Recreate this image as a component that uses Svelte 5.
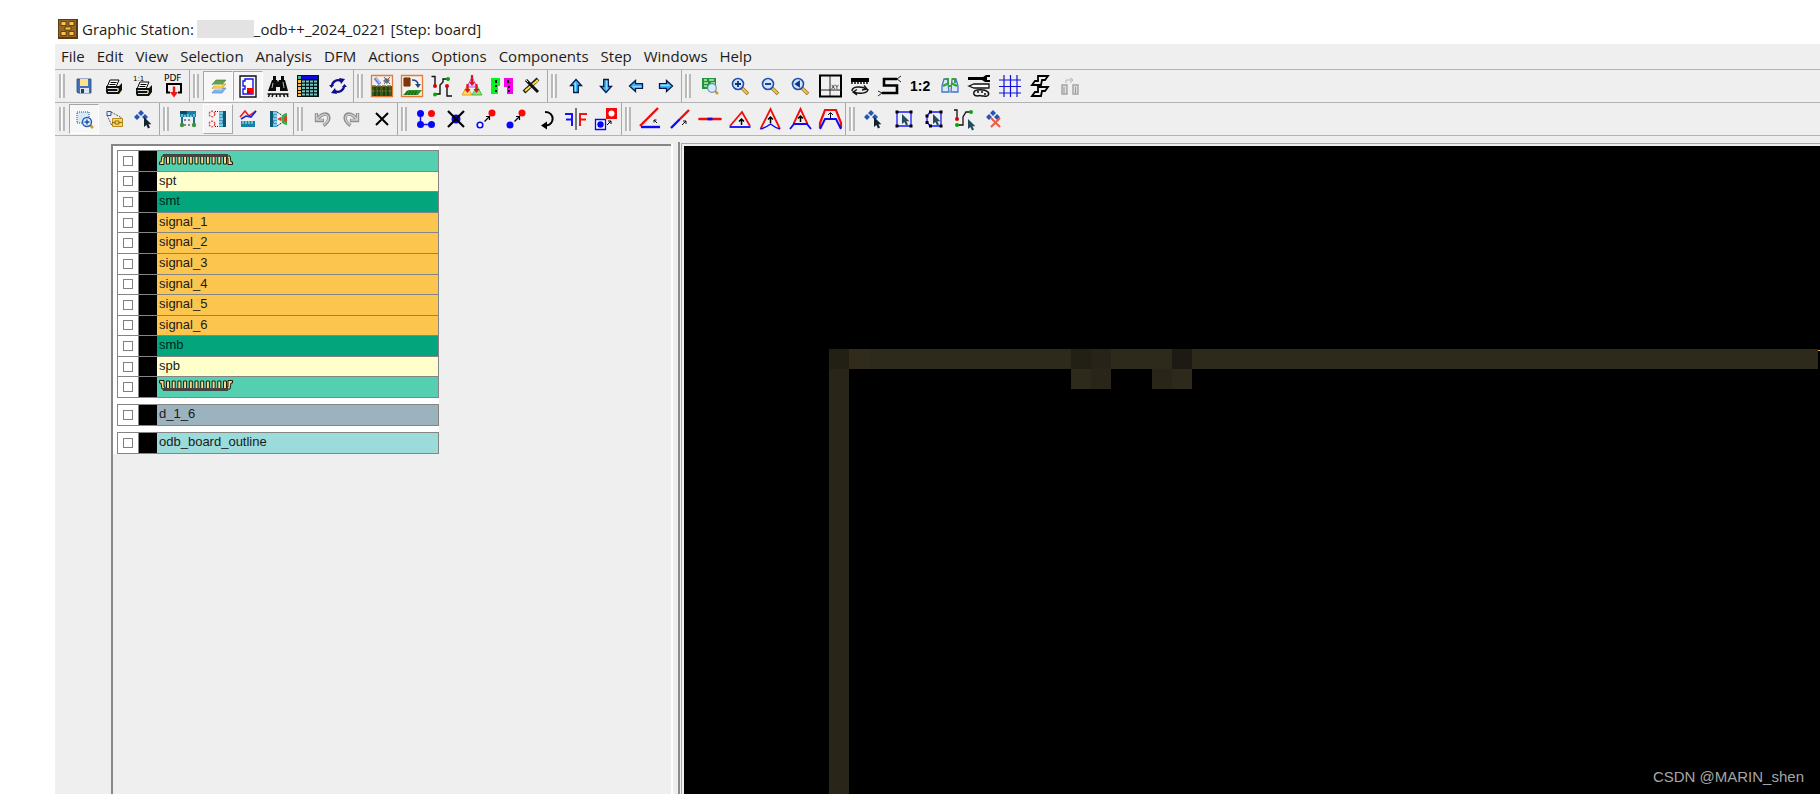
<script>
  const cursor = (x, y, fill = '#123') =>
    `<path transform="translate(${x} ${y})" d="M0 0V10L2.4 8L4 11.5L6 10.5L4.4 7.2H7.4Z" fill="${fill}"/>`;

  const diamonds = '<path d="M11 5l3 3-3 3-3-3zM7 9l3 3-3 3-3-3zM15 9l3 3-3 3-3-3z" fill="#2456b8"/>';

  const lens = (sign) => `
    <path d="M16 16l6 6" stroke="#9a7426" stroke-width="3.6"/>
    <path d="M16 16l5.5 5.5" stroke="#f0c45c" stroke-width="2"/>
    <circle cx="12" cy="12" r="5.5" fill="#cfe6fb" stroke="#1f4fa8" stroke-width="1.6"/>
    <path d="${sign}" stroke="#0b2f88" stroke-width="1.8" fill="#0b2f88"/>`;

  const printer = `
    <path d="M10 8h9l-3 7H7z" fill="#fff" stroke="#000"/>
    <path d="M10.5 10.5h6M9.5 12.5h6" stroke="#000"/>
    <path d="M6 14h13l3-3v7l-3 4H7l-1-2z" fill="#111"/>
    <path d="M7.5 16.5h11M8 19.5h10" stroke="#ddd"/>
    <circle cx="18" cy="18" r="1" fill="#dd3"/>`;

  const smallArrow = '<path d="M12.5 16.5l5-5m-3.5 0h3.5v3.5" stroke="#000" stroke-width="1.2" fill="none"/>';
  const upArrow = '<path d="M14.5 20v-5m-2.5 1.5l2.5-2.5l2.5 2.5" stroke="#000" stroke-width="1.5" fill="none"/>';

  const blockArrow = (angle) => `
    <path transform="rotate(${angle} 14 14)" d="M14 7.500l5.5 6h-3.2v7h-4.6v-7H8.500z" fill="#36b5fa" stroke="#06194c" stroke-width="1.3"/>
    <path transform="rotate(${angle} 14 14)" d="M13.2 10.5v9" stroke="#a5e8ff" stroke-width="1.2"/>`;

  const curl = `
    <path d="M8.5 8v7.5H16M9 15C12 9.5 18.500 7 20.5 11C22 14.5 19 18 15.5 20.5" fill="none" stroke="#8e8e8e" stroke-width="3.4"/>
    <path d="M8.5 8.5v6.5H15M9 14.5C12 9.5 18.5 7.5 20.3 11.5C21.5 14.5 19 17.5 15.8 20" fill="none" stroke="#cfcfcf" stroke-width="1.3"/>`;

  const icons = {
    save: `<path d="M7 7h14v14H8l-1-1z" fill="#4571b8" stroke="#244a86" stroke-width=".8"/><path d="M10 7h8v7h-8z" fill="#ffe18a"/><path d="M10 16h9v5h-9z" fill="#dbe5f0"/><path d="M11 17h3v4h-3z" fill="#253c66"/>`,
    print: printer,
    print11: `<g transform="translate(0 2)">${printer}</g><text x="3" y="9" font-family="DejaVu Sans" font-size="7">1:1</text>`,
    pdf: `<text x="4" y="9" font-family="DejaVu Sans" font-size="9">PDF</text><path d="M10 20.5H7V12h14v8.5h-3" fill="none" stroke="#000" stroke-width="2"/><path d="M14 14.5v8" stroke="#f21313" stroke-width="2.4"/><path d="M10 20h8l-4 5.5z" fill="#f21313"/>`,
    layers: `<path d="M12 16h10l-4 5H8z" fill="#82b4ee" stroke="#4a7fc4" stroke-width=".6"/><path d="M12 12h10l-4 4.500H8z" fill="#ffc83a" stroke="#bd8e1c" stroke-width=".6"/><path d="M12 8h10l-4 4.500H8z" fill="#63a054" stroke="#3e7a34" stroke-width=".6"/><path d="M9 13h9M9 17h9" stroke="#f6f6f6"/>`,
    page: `<path d="M6 4h16v21H6z" fill="#f8f8f8" stroke="#111" stroke-width="1.4"/><path d="M11 7h8v15H9v-5h2v-3H9V9h2z" fill="#fff" stroke="#1616ef" stroke-width="1.4"/><path d="M13 16h6v6h-6z" fill="#f00"/><path d="M13 19h3v3h-3z" fill="#b00030"/>`,
    find: `<path d="M9 4h3v4h-3zM17 4h3v4h-3zM8 8h5l1 2l1-2h6l3 11h-8v-4h-4v4H4z" fill="#0a0a0a"/><path d="M9 11l-1 5M19 10l1 6" stroke="#bbb"/><path d="M3.5 22h21M5.5 22l-1 3M9 22l-1 3M12.5 22v3M16 22v3M19.5 22l1 3M23 22l1 3" stroke="#111" stroke-width="1.5"/>`,
    table: `<path d="M3 3h22v22H3z" fill="#071414"/><path d="M8 4h16v3H8z" fill="#0a0ae0"/><path d="M4 4h3v3H4z" fill="#4ab597"/><path d="M4 8h3v3H4zM4 12h3v2H4zM4 15h3v3H4zM4 19h3v2H4zM4 22h3v2H4z" fill="#ffbd4f"/><path d="M8 9.5h16M8 12.7h16M8 16h16M8 19.2h16M8 22.5h16" stroke="#73c3c3" stroke-width="2" stroke-dasharray="3 1"/>`,
    refresh: `<path d="M8 14a6 6 0 0 1 9-5M20 14a6 6 0 0 1-9 5" fill="none" stroke="#0c0c8c" stroke-width="2.2"/><path d="M15 6l6 1l-4 5zM13 22l-6-1l4-5z" fill="#0c0c8c"/><path d="M5 13h5l-2.5 3zM18 15h5l-2.5-3z" fill="#0c0c8c"/>`,
    scene: `<path d="M3.5 3.5h21v21h-21z" fill="#f3f1e9" stroke="#e87a38" stroke-width="1.3"/><path d="M4 14h20v10H4z" fill="#315e1c"/><path d="M4 14h20M4 19h20" stroke="#9a6a2a" stroke-width="1.4" stroke-dasharray="4 1"/><path d="M7 15v9M11 15v9M16 15v9M20 15v9" stroke="#0f2408"/><path d="M7 6l5 6" stroke="#6b85e8" stroke-width="3.5"/><path d="M8 6l4 5" stroke="#dbe4ff"/><path d="M15 9l3-3l4 2l-3 4z" fill="#678"/><path d="M16 12l6-7M16 5l6 7" stroke="#567"/>`,
    chip: `<path d="M3.5 3.5h21v21h-21z" fill="#f6f2ec" stroke="#e87a38" stroke-width="1.3"/><path d="M6 6h6v8H6z" fill="#b44d11" stroke="#502000"/><path d="M7 8h4M7 10h4M7 12h4" stroke="#501c00"/><path d="M14 8q6 0 6 5" fill="none" stroke="#274689" stroke-width="1.5"/><path d="M17 12h6l-3 4z" fill="#274689"/><path d="M10 18h14l-4 5H5z" fill="#2e962c"/><path d="M8 20h12M7 22h12" stroke="#10480d" stroke-dasharray="2 1"/>`,
    route: `<path d="M3.5 4.5h3.5v9M7 22h5v-9l3-3v-3h5M19 14v10h5" fill="none" stroke="#111" stroke-width="1.4"/><circle cx="7" cy="14" r="2" fill="#d00"/><circle cx="19" cy="14" r="2" fill="#d00"/><circle cx="7" cy="22.5" r="2" fill="#0a0"/><circle cx="20" cy="7" r="2" fill="#0a0"/>`,
    prisms: `<path d="M14 5l5 10H9z" fill="#e5caff" stroke="#a55be0"/><path d="M9 14l5 9H4z" fill="#ffd76b" stroke="#f09a20"/><path d="M19 14l5 9H14z" fill="#8fe070" stroke="#40c040"/><path d="M14 3v7M9.5 12v6M18.5 12v6" stroke="#e01020" stroke-width="2.2"/><path d="M11 10h6l-3 4zM6.5 17h6l-3 4zM15.5 17h6l-3 4z" fill="#e01020"/>`,
    flip: `<path d="M3 6h9v8h-2v8H3z" fill="#00f51a"/><path d="M16 6h9v16h-6v-7h-3z" fill="#fb00ee"/><path d="M7 8h2v3H7zM7 13h2v2H7zM7 18h2v2H7zM19 8h2v3h-2zM20 14h2v2h-2zM20 18h2v2h-2z" fill="#111"/>`,
    tools: `<path d="M6 20L20 7" stroke="#1a1a1a" stroke-width="4"/><path d="M7 19L20 8" stroke="#ffe43c" stroke-width="2"/><path d="M8 8l12 12" stroke="#111" stroke-width="3"/><path d="M7 7l3 3" stroke="#ddd"/>`,
    up: blockArrow(0),
    down: blockArrow(180),
    left: blockArrow(270),
    right: blockArrow(90),
    zoomBoard: `<path d="M6 6h14v11H6z" fill="#23923a"/><path d="M8 8h3M13 8h5M8 11h4M15 11h4M8 14h3" stroke="#b8f0b8" stroke-width="1.3"/><path d="M18 18l4 4" stroke="#d39a32" stroke-width="2.5"/><circle cx="16" cy="16" r="4.3" fill="#d6ecfc" stroke="#6d92bd" stroke-width="1.2"/>`,
    zoomIn: lens('M9 12h6M12 9v6'),
    zoomOut: lens('M9 12h6'),
    zoomPrev: lens('M10 12l3-2v4z'),
    xy: `<path d="M4 3.5h21v21H4z" fill="#f1f1f1" stroke="#000" stroke-width="2"/><path d="M14 4v20M4 18h21" stroke="#222"/><text x="15" y="17" font-family="DejaVu Sans" font-size="6">XY</text>`,
    measure: `<path d="M5 6h18v4H5z"/><path d="M6 12v-2M9 12v-2M12 12v-2M15 12v-2M18 12v-2M21 12v-2" stroke="#000" stroke-width="1.4"/><path d="M6 19c0-5 10-5 14-2M22 17c0 5-10 5-14 3M18 13.5l3 3.5l-5 1M11 17.5L7 20l4 3" fill="none" stroke="#111" stroke-width="1.4"/>`,
    net: `<path d="M21 7H8v6.5h13V21H6" fill="none" stroke="#000" stroke-width="2.6"/><path d="M21 7l4-3M21 7l4 3M6 21l-4-2M6 21l-4 3" stroke="#222"/>`,
    half: `<text x="4" y="19" font-family="Liberation Sans" font-weight="700" font-size="14">1:2</text>`,
    search: `<path d="M8 7h4v4l1 9H6v-6zM16 7h4l2 7v6h-7z" fill="#d8e8fa" stroke="#4674bf" stroke-width="1.3"/><path d="M9 7h3v4M16 7h3v4M12 14h4M7 14l6-3M15 11l6 3" stroke="#33a33a" stroke-width="2" fill="none"/>`,
    config: `<path d="M2 5h15l3-2h4v2h-3v3h3v2h-5l-3-2H2z" fill="#000"/><path d="M3 14l5-2h15v4H8z" fill="#fff" stroke="#111" stroke-width="1.3"/><path d="M8 20c1-3 11-3 14 0c2 3-1 5-4 4c-4 0-5-1-6 0c-3 0-5-1-4-4z" fill="#eee" stroke="#111" stroke-width="1.5"/><path d="M11 20h2M15 20h2M18 22h2" stroke="#111" stroke-width="1.5"/>`,
    grid: `<path d="M8 3v22M14.5 3v22M21 3v22M3 8h22M3 14.5h22M3 21h22" stroke="#1010dd" stroke-width="1.2"/>`,
    shapes: `<path d="M12 4h10l-3 4h-3l-1 5H6l3-4h3zM12 15h10l-3 4h-3l-1 5H6l3-4h3z" fill="none" stroke="#000" stroke-width="1.8"/>`,
    compare: `<path d="M6 13h5v9H6zM17 13h5v9h-5z" fill="#ddd" stroke="#a4a4a4" stroke-width="1.4"/><path d="M10 11V8h6M14 6l3 2l-3 3" fill="none" stroke="#b5b5b5"/><path d="M8 15v6M19.5 15v6" stroke="#999"/>`,

    selectZoom: `<path d="M7 7h12v11H7z" fill="#d6e9fb" stroke="#254f91" stroke-dasharray="1 1"/><path d="M19 19l4 4" stroke="#d39a32" stroke-width="2.5"/><circle cx="17" cy="17" r="4.5" fill="#e0effc" stroke="#2a5cad" stroke-width="1.4"/><path d="M14.5 17h5M17 14.5v5" stroke="#1d4da3" stroke-width="1.4"/>`,
    selectPart: `<path d="M11 7l11 6M7 10l5 11" stroke="#555" stroke-dasharray="2 1"/><path d="M7 6.5h4v4H7z" fill="#e7f1ff" stroke="#2a5bad"/><path d="M12.5 13.5h10v8h-10z" fill="#f5d66c" stroke="#b88d19"/><path d="M15 16h4v3h-4zM12 17.5h3M19 17.5h3" fill="none" stroke="#8d6b10"/>`,
    pick: `${diamonds}${cursor(14, 12)}`,
    rulerTop: `<path d="M6 6h16v6H6z" fill="#187fa5"/><path d="M6 6h7v3H6z" fill="#0c4763"/><path d="M8 12V9M11 12v-2M14 12V9M17 12v-2M20 12V9" stroke="#b6efff"/><path d="M8 12v6M20 12v6" stroke="#147193" stroke-width="2"/><path d="M10 15h8M10 20h8" stroke="#222" stroke-dasharray="2 2"/><circle cx="8" cy="20" r="2.2" fill="#3c963c"/><circle cx="20" cy="20" r="2.2" fill="#3c963c"/>`,
    rulerRight: `<g fill="none" stroke="#e84242" stroke-width="1.3" stroke-dasharray="2 1"><circle cx="8" cy="9" r="2.8"/><circle cx="8" cy="19" r="2.8"/></g><path d="M11 6.5h4M11 21.5h4" stroke="#222" stroke-dasharray="1 1"/><path d="M15 6h7v16h-7z" fill="#3b9fc4"/><path d="M19 6h3v16h-3z" fill="#0f5778"/><path d="M15 8h4M15 11h3M15 14h4M15 17h3M15 20h4" stroke="#d2f4ff"/>`,
    chart: `<path d="M6 12l5-6l4 5l7-5" fill="none" stroke="#ee2020" stroke-width="1.6"/><path d="M7 14l5-3l5 1l5-6" fill="none" stroke="#1625dc" stroke-width="1.6"/><path d="M7 16h14v6H7z" fill="#197fa8"/><path d="M9 16v3M12 16v3M15 16v3M18 16v3" stroke="#c0f1ff"/>`,
    rulerLeft: `<path d="M6 6h7v16H6z" fill="#3b9fc4"/><path d="M6 6h3v16H6z" fill="#0f5778"/><path d="M13 8H9M13 11h-3M13 14H9M13 17h-3M13 20H9" stroke="#d2f4ff"/><path d="M13 7l6 4M13 21l6-4" stroke="#222" stroke-dasharray="2 1"/><path d="M23 8a6 6 0 0 0 0 12z" fill="#34b34c"/><path d="M23 11a3 3 0 0 0 0 6zM13 14l4-2v4z" fill="#e23a28"/>`,
    undo: curl,
    redo: `<g transform="translate(28 0) scale(-1 1)">${curl}</g>`,
    clear: `<path d="M8 8l12 12M20 8L8 20" stroke="#000" stroke-width="2"/>`,
    padAdd: `<path d="M8.5 8.5v11h11" fill="none" stroke="#1717ff" stroke-width="1.5"/><g fill="#0808f8"><circle cx="8.5" cy="8.5" r="3.5"/><circle cx="8.5" cy="19.5" r="3.5"/><circle cx="19.5" cy="19.5" r="3.5"/></g><circle cx="19.5" cy="8.5" r="3.5" fill="#fa0808"/>`,
    padDelete: `<circle cx="14" cy="14" r="4.5" fill="#0808ee"/><path d="M6 6l16 16M22 6L6 22" stroke="#000" stroke-width="2.2"/>`,
    padMove: `<circle cx="8" cy="20" r="2.8" fill="#fff" stroke="#0808f8" stroke-width="1.6"/>${smallArrow}<circle cx="20" cy="8" r="3.5" fill="#fa0808"/>`,
    padCopy: `<circle cx="8" cy="20" r="3.5" fill="#0808f8"/>${smallArrow}<circle cx="20" cy="8" r="3.5" fill="#fa0808"/>`,
    rotate: `<path d="M13 7c10 0 10 13 1 13.5" fill="none" stroke="#000" stroke-width="2"/><path d="M9 20.5l6-4v8z"/>`,
    mirror: `<path d="M3 9h7v12M4 14.5h6" fill="none" stroke="#1414f6" stroke-width="2"/><path d="M14 3v22" stroke="#000"/><path d="M25 9h-7v12M24 14.5h-6" fill="none" stroke="#f51414" stroke-width="2"/>`,
    scale: `<path d="M3.5 14.5h10v10h-10z" fill="#fff" stroke="#0808f8" stroke-width="1.3"/><circle cx="8.5" cy="19.5" r="3.2" fill="#0808f8"/><path d="M14 3h11v11H14z" fill="#f80808"/><circle cx="19.5" cy="8.5" r="3" fill="#fff"/><path d="M15 20l4-4m-3 0h3v3" fill="none" stroke="#000"/>`,
    angle: `<path d="M4 21L22 3" stroke="#f40c0c" stroke-width="2.4"/><path d="M5 22h19" stroke="#0c0cf4" stroke-width="2.4"/><path d="M21 18l-3-3m0 2.5V15h2.500" fill="none" stroke="#111"/>`,
    line: `<path d="M14 14l9-9" stroke="#f40c0c" stroke-width="2.4"/><path d="M5 23l9-9" stroke="#0c0cf4" stroke-width="2.4"/><path d="M16 20l4-4m-3 0h3v3" fill="none" stroke="#111"/>`,
    flat: `<path d="M3.5 14h21" stroke="#f40c0c" stroke-width="2.6" stroke-linecap="round"/><path d="M11.5 14h5" stroke="#0c0cf4" stroke-width="2.6"/>`,
    triangle: `<path d="M4 21l12-14l8 14" fill="none" stroke="#f40c0c" stroke-width="1.8"/><path d="M3.5 22h21" stroke="#0c0cf4" stroke-width="1.8"/><g transform="translate(1 0)">${upArrow}</g>`,
    arrowHead: `<path d="M4.5 24L14.5 4L24 24" fill="none" stroke="#f40c0c" stroke-width="1.8"/><path d="M4.5 24q5-1 10-5q5 4 9.5 5" fill="none" stroke="#0c0cf4" stroke-width="1.5"/><g transform="translate(0 -2)">${upArrow}</g>`,
    apex: `<path d="M7.5 19l7-15l7 15" fill="none" stroke="#f40c0c" stroke-width="1.8"/><path d="M4 24l4-5h13l4 5" fill="none" stroke="#0c0cf4" stroke-width="1.8"/><g transform="translate(0 -3)">${upArrow}</g>`,
    trapezoid: `<path d="M4 23v-5L9 5h11l5 13v5" fill="none" stroke="#f40c0c" stroke-width="2.2"/><path d="M4 24l5-10h11l5 10" fill="none" stroke="#0c0cf4" stroke-width="2"/><path d="M14.5 13V8m-2.5 2l2.5-2.500l2.5 2.5" stroke="#111" fill="none"/>`,
    pickRect: `<path d="M7 7h14v14H7z" fill="none" stroke="#1a1af0" stroke-width="1.3"/><path d="M5.5 5.5h3v3h-3zM19.5 5.5h3v3h-3zM5.5 19.5h3v3h-3zM19.5 19.5h3v3h-3z"/>${cursor(12, 9, '#234c60')}`,
    pickPoly: `<path d="M10 7h11v14H10l-3-4v-6z" fill="none" stroke="#1a1af0" stroke-width="1.3"/><path d="M9 5.5h3v3H9zM19.5 5.5h3v3h-3zM5.5 9.5h3v3h-3zM5.5 16h3v3h-3zM9 19.5h3v3H9zM19.5 19.5h3v3h-3z"/>${cursor(13, 9, '#234c60')}`,
    pickNet: `<path d="M4 5h3v9M7 20h6v-8l3-5h5" fill="none" stroke="#111" stroke-width="1.3"/><circle cx="7" cy="14" r="2" fill="#d00"/><circle cx="7" cy="20" r="2" fill="#0a0"/><circle cx="21" cy="7" r="2" fill="#0a0"/>${cursor(18, 14, '#234c60')}`,
    unpick: `<g transform="translate(2 0)">${diamonds}</g><path d="M11 13l9 9M20 13l-9 9" stroke="#ee5a42" stroke-width="2"/>`
  };

  const menus = ['File', 'Edit', 'View', 'Selection', 'Analysis', 'DFM', 'Actions', 'Options', 'Components', 'Step', 'Windows', 'Help'];

  const toolbars = [
    [
      ['save', 'print', 'print11', 'pdf'],
      ['layers', 'page', 'find', 'table', 'refresh'],
      ['scene', 'chip', 'route', 'prisms', 'flip', 'tools'],
      ['up', 'down', 'left', 'right'],
      ['zoomBoard', 'zoomIn', 'zoomOut', 'zoomPrev', 'xy', 'measure', 'net', 'half', 'search', 'config', 'grid', 'shapes', 'compare']
    ],
    [
      ['selectZoom', 'selectPart', 'pick'],
      ['rulerTop', 'rulerRight', 'chart', 'rulerLeft'],
      ['undo', 'redo', 'clear'],
      ['padAdd', 'padDelete', 'padMove', 'padCopy', 'rotate', 'mirror', 'scale'],
      ['angle', 'line', 'flat', 'triangle', 'arrowHead', 'apex', 'trapezoid'],
      ['pick', 'pickRect', 'pickPoly', 'pickNet', 'unpick']
    ]
  ];

  let pressed = $state({ layers: true, page: true, selectZoom: true });
  const raised = 'rulerRight';

  const layerGroups = [
    [
      { id: 'comp_top', kind: 'comp', art: 'top' },
      { id: 'spt', kind: 'silk' },
      { id: 'smt', kind: 'mask' },
      { id: 'signal_1', kind: 'signal' },
      { id: 'signal_2', kind: 'signal' },
      { id: 'signal_3', kind: 'signal' },
      { id: 'signal_4', kind: 'signal' },
      { id: 'signal_5', kind: 'signal' },
      { id: 'signal_6', kind: 'signal' },
      { id: 'smb', kind: 'mask' },
      { id: 'spb', kind: 'silk' },
      { id: 'comp_bot', kind: 'comp', art: 'bottom' }
    ],
    [{ id: 'd_1_6', kind: 'drill' }],
    [{ id: 'odb_board_outline', kind: 'doc' }]
  ];

  const pins = Array.from({ length: 11 }, (_, i) => 7.5 + i * 5.7);

  function toggle(name) {
    if (name in pressed) pressed[name] = !pressed[name];
  }
</script>

<div class="window">
  <header class="title">
    <svg class="app-icon" width="20" height="20" viewBox="0 0 20 20" aria-hidden="true">
      <path d="M0 0h20v20H0z" fill="#5b3b12" />
      <path d="M1 1h17v17H1z" fill="#93662a" />
      <path d="M3 2.500h5v4H3zM11 2.500h5v4h-5zM3 12.500h5v4H3zM11 12.500h5v4h-5zM7 8h6v3H7z" fill="#f9c64a" stroke="#4a2e0a" stroke-width=".8" />
    </svg>
    <span>Graphic Station:</span>
    <span class="masked"></span>
    <span>_odb++_2024_0221 [Step: board]</span>
  </header>

  <div class="chrome">
    <nav class="menubar">
      {#each menus as menu}
        <button class="menu">{menu}</button>
      {/each}
    </nav>

    {#each toolbars as groups}
      <div class="toolbar" role="toolbar">
        {#each groups as group}
          <div class="group">
            <span class="grip"></span>
            {#each group as name}
              <button
                class="tool"
                class:pressed={pressed[name]}
                class:raised={name === raised}
                aria-label={name}
                onclick={() => toggle(name)}
              >
                <svg width="28" height="28" viewBox="0 0 28 28" aria-hidden="true">{@html icons[name]}</svg>
              </button>
            {/each}
          </div>
        {/each}
      </div>
    {/each}

    <main class="workspace">
      <aside class="panel">
        <div class="layers">
          {#each layerGroups as rows}
            <div class="layer-group">
              {#each rows as layer}
                <label class="layer">
                  <span class="tick"><input type="checkbox" aria-label={layer.id} /></span>
                  <span class="swatch"></span>
                  <span class="name {layer.kind}">
                    {#if layer.art}
                      <svg class:flipped={layer.art === 'bottom'} width="74" height="11" viewBox="0 0 74 11" aria-hidden="true">
                        <path d="M.5 10.500V8H2l1-6h3v2H5v6.500zM73.500 10.500V8H72l-1-6h-3v2h1v6.500z" fill="#f4dc87" stroke="#1c1c10" />
                        {#each pins as x}
                          <path d="M{x} 2v8h3V2" fill="#f4dc87" stroke="#1c1c10" />
                        {/each}
                        <path d="M4 0h65v3H4z" fill="#444" />
                      </svg>
                    {:else}
                      {layer.id}
                    {/if}
                  </span>
                </label>
              {/each}
            </div>
          {/each}
        </div>
      </aside>

      <div class="splitter"></div>

      <section class="board">
        <svg width="100%" height="100%" aria-label="Board outline">
          <rect class="edge" x="145" y="203" height="20" fill="#2d291b" />
          <rect x="145" y="223" width="20" height="100%" fill="#292519" />
          <rect x="145" y="203" width="20" height="20" fill="#221f14" />
          <rect x="165" y="203" width="20" height="20" fill="#302b1a" />
          <rect x="387" y="203" width="20" height="20" fill="#221f14" />
          <rect x="407" y="203" width="20" height="20" fill="#282318" />
          <rect x="387" y="223" width="20" height="20" fill="#2e2a1b" />
          <rect x="407" y="223" width="20" height="20" fill="#292519" />
          <rect x="468" y="223" width="20" height="20" fill="#292519" />
          <rect x="488" y="223" width="20" height="20" fill="#2e2a1b" />
          <rect x="488" y="203" width="20" height="20" fill="#1d1a13" />
          <rect x="100%" y="204" width="2" height="1" fill="#d8b860" transform="translate(-2 0)" />
        </svg>
        <span class="credit">CSDN @MARIN_shen</span>
      </section>
    </main>
  </div>
</div>

<style>
  :global(body) { margin: 0; background: #fff; }

  .window {
    display: flex;
    flex-direction: column;
    height: 100vh;
    padding-left: 55px;
    box-sizing: border-box;
    overflow: hidden;
    font-family: 'Open Sans', 'Noto Sans', sans-serif;
    font-size: 15px;
    color: #1c1c1c;
  }

  .title {
    display: flex;
    align-items: center;
    flex: none;
    height: 30px;
    padding: 14px 3px 0;
    white-space: nowrap;
  }
  .app-icon { margin-right: 4px; }
  .masked {
    width: 57px;
    height: 18px;
    margin-left: 3px;
    background: #e3e3e3;
  }

  .chrome {
    display: flex;
    flex-direction: column;
    flex: 1;
    min-height: 0;
    background: #efefef;
  }

  .menubar {
    display: flex;
    flex: none;
    height: 25px;
  }
  .menu {
    padding: 0 6px;
    border: none;
    background: none;
    font: inherit;
    color: inherit;
    line-height: 25px;
  }
  .menu:hover { background: #d8e6f2; }

  .toolbar {
    display: flex;
    flex: none;
    height: 32px;
    border-top: 1px solid #b4b4b4;
  }
  .group {
    display: flex;
    align-items: center;
    border-right: 1px solid #a8a8a8;
    margin-right: -1px;
  }
  .group:last-child { border-right: none; }

  .grip {
    width: 2px;
    height: 24px;
    margin: 0 4px;
    border: solid #b9b9b9;
    border-width: 0 2px;
    box-shadow: inset 1px 0 #fff;
  }

  .tool {
    display: flex;
    align-items: center;
    justify-content: center;
    box-sizing: border-box;
    width: 30px;
    height: 30px;
    padding: 0;
    border: 1px solid transparent;
    background: none;
  }
  .pressed {
    border-color: #a5a5a5 #fff #fff #a5a5a5;
    background: #f7f7f7;
  }
  .raised { border-color: #fff #a9a9a9 #a9a9a9 #fff; background: #f4f4f4; }

  .workspace {
    display: flex;
    flex: 1;
    min-height: 0;
    border-top: 1px solid #b4b4b4;
    padding: 8px 0 0 56px;
  }

  .panel {
    flex: none;
    width: 558px;
    border: solid #868686;
    border-width: 2px 0 0 2px;
    box-shadow: 2px 0 #fff;
  }
  .layers {
    display: flex;
    flex-direction: column;
    gap: 6px;
    width: 322px;
    padding: 4px 0 0 4px;
    background: #fff;
  }
  .layer-group {
    border: solid #858585;
    border-width: 1px 1px 0 1px;
  }
  .layer-group:first-child {
    display: grid;
    grid-auto-rows: 1fr;
    height: 247px;
  }
  .layer {
    display: flex;
    box-sizing: border-box;
    min-height: 21px;
    border-bottom: 1px solid #858585;
    background: #fff;
  }
  .layer-group:first-child .layer { min-height: 0; }

  .tick {
    display: flex;
    align-items: center;
    justify-content: center;
    width: 20px;
  }
  .tick input {
    appearance: none;
    box-sizing: border-box;
    width: 10px;
    height: 10px;
    margin: 0;
    border: 1px solid #808080;
    background: #fff;
  }
  .tick input:checked { background: #444; }

  .swatch {
    width: 18px;
    background: #000;
    border-left: 1px solid #858585;
  }
  .name {
    display: flex;
    align-items: flex-start;
    flex: 1;
    padding: 1px 2px;
    font-family: 'Liberation Sans', Arial, sans-serif;
    font-size: 13px;
    line-height: 16px;
    color: #1a1a1a;
  }
  .name svg { margin-top: 2px; }
  .flipped { transform: scaleY(-1); }

  .comp   { background: #54cfb0; }
  .silk   { background: #ffffcc; }
  .mask   { background: #02a57c; color: #03261d; }
  .signal { background: #fcc64e; }
  .drill  { background: #9cb2bf; }
  .doc    { background: #9bdbda; }

  .splitter {
    flex: none;
    width: 2px;
    margin: -2px 1px 0 7px;
    background: #8c8c8c;
  }

  .board {
    position: relative;
    flex: 1;
    min-width: 0;
    margin-top: -1px;
    border: solid #a9a9a9;
    border-width: 1px 0 0 1px;
    padding: 2px 0 0 2px;
    overflow: hidden;
  }
  .board svg { display: block; background: #000; }
  .edge { width: calc(100% - 147px); }

  .credit {
    position: absolute;
    right: 16px;
    bottom: 8px;
    font-family: 'Liberation Sans', Arial, sans-serif;
    font-size: 15px;
    line-height: 18px;
    color: #a6a6a6;
  }
</style>
